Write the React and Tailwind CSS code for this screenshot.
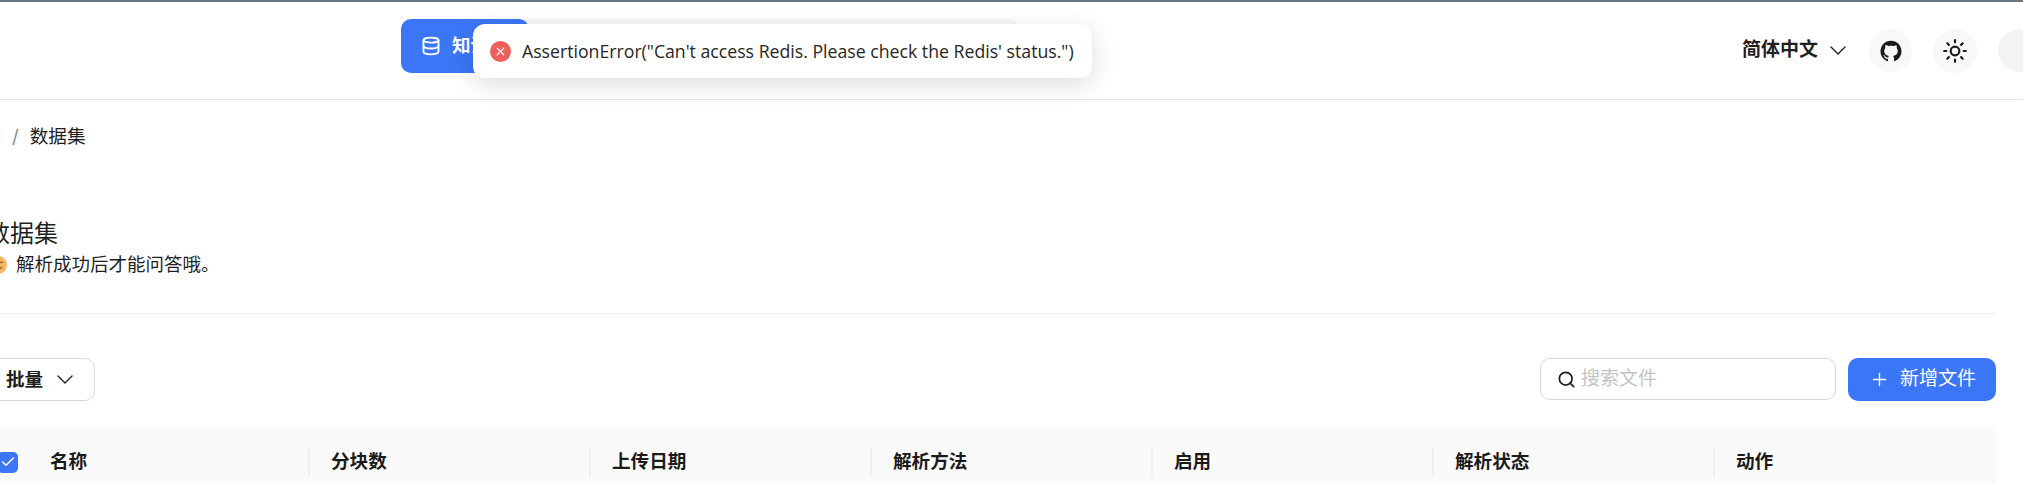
import React from 'react';
import { Database, Plus, Search, Sun, Check, X } from 'lucide-react';
import { AiOutlineGithub } from 'react-icons/ai';

function Chevron({ className }) {
  return (
    <svg width="16" height="9" viewBox="0 0 16 9" fill="none" className={className}>
      <path d="M1 1l7 7 7-7" stroke="#1f1f1f" strokeWidth="1.4" strokeLinecap="round" strokeLinejoin="round" />
    </svg>
  );
}

function Smile() {
  return (
    <svg width="18" height="18" viewBox="0 0 18 18" className="ml-[3px] shrink-0">
      <circle cx="9" cy="9" r="9" fill="#f6b65f" />
      <path d="M4 7q1.5-2 3 0M11 7q1.5-2 3 0" stroke="#8a5a1e" strokeWidth="1.2" fill="none" />
      <path d="M5 11q4 4 8 0" stroke="#8a5a1e" strokeWidth="1.2" fill="none" />
    </svg>
  );
}

function Col({ label }) {
  return (
    <div className="flex h-[30px] w-[281px] shrink-0 items-center border-l-2 border-[#f0f0f0] pl-[21px] text-[18.6px] font-bold text-[#1a1a1a]">
      {label}
    </div>
  );
}

export default function App() {
  return (
    <div className="h-[484px] w-[2023px] overflow-hidden bg-white font-['Inter','Noto_Sans_CJK_SC',sans-serif] text-[#1f1f1f]">
      <div className="h-[2px] bg-[#6b7780]" />
      <header className="relative flex h-[98px] items-center border-b border-[#e5e5e5] pl-[401px]">
        <div className="mb-[9px] flex h-[54px] w-[618px] items-center rounded-[10px] bg-[#f7f7f8]">
          <div className="flex h-[54px] w-[128px] items-center gap-[11px] rounded-[10px] bg-[#3b76f6] pl-[20px] text-[18.6px] font-bold text-white">
            <Database size={20} strokeWidth={2.2} />
            <span>知识库</span>
          </div>
        </div>
        <div className="ml-auto flex items-center">
          <span className="text-[19px] font-bold">简体中文</span>
          <Chevron className="ml-[12px]" />
          <div className="ml-[23px] flex size-[43px] items-center justify-center rounded-full bg-[#f8f8f8]">
            <AiOutlineGithub size={24} className="text-[#1a1a1a]" />
          </div>
          <div className="ml-[21px] flex size-[44px] items-center justify-center rounded-full bg-[#f8f8f8]">
            <Sun size={26} strokeWidth={2} className="text-[#1a1a1a]" />
          </div>
          <div className="ml-[21px] -mr-[18px] size-[43px] shrink-0 rounded-full bg-[#f2f3f5]" />
        </div>
        <div className="absolute left-[473px] top-[22px] flex h-[54px] w-[619px] items-center rounded-[12px] bg-white pl-[17px] shadow-[0_6px_24px_rgba(0,0,0,0.14)]">
          <div className="flex size-[21px] items-center justify-center rounded-full bg-[#ee5f5b]">
            <X size={13} strokeWidth={2.2} className="text-white" />
          </div>
          <span className="ml-[11px] whitespace-nowrap font-['Open_Sans','Noto_Sans_CJK_SC',sans-serif] text-[17.7px] text-[#262626]">
            AssertionError("Can't access Redis. Please check the Redis' status.")
          </span>
        </div>
      </header>

      <main className="-ml-[14px] pr-[27px]">
        <div className="-ml-[41px] flex h-[74px] items-center text-[18.67px]">
          <span className="text-[#8c8c8c]">知识库</span>
          <span className="mx-[11px] text-[#8c8c8c]">/</span>
          <span>数据集</span>
        </div>
        <h1 className="mt-[44px] text-[24px] leading-[32px]">数据集</h1>
        <div className="mt-[2px] flex h-[26px] items-center gap-[9px] text-[18.5px]">
          <Smile />
          <span>解析成功后才能问答哦。</span>
        </div>
        <div className="mt-[35px] h-px bg-[#eeeeee]" />

        <div className="mt-[44px] flex items-start">
          <button className="flex h-[43px] w-[109px] items-center rounded-[10px] border border-[#d9d9d9] pl-[19px] text-[18.6px] font-bold">
            <span>批量</span>
            <Chevron className="ml-[14px]" />
          </button>
          <div className="ml-auto flex h-[42px] w-[296px] items-center rounded-[10px] border border-[#d9d9d9] pl-[16px] text-[19px] text-[#c4c4c4]">
            <Search size={19} strokeWidth={2.2} className="text-[#1f1f1f]" />
            <span className="ml-[5px]">搜索文件</span>
          </div>
          <button className="ml-[12px] flex h-[43px] w-[148px] items-center rounded-[10px] bg-[#3b76f6] pl-[21px] text-[19px] text-white">
            <Plus size={21} strokeWidth={1.5} />
            <span className="ml-[10px]">新增文件</span>
          </button>
        </div>

        <div className="mt-[24px] flex h-[72px] items-start rounded-t-[10px] bg-[#fafafa] pt-[22px]">
          <div className="flex h-[30px] w-[322px] shrink-0 items-center pl-[11px]">
            <div className="flex size-[21px] items-center justify-center rounded-[5px] bg-[#3b76f6]">
              <Check size={16} strokeWidth={2.2} className="text-white" />
            </div>
            <span className="ml-[32px] text-[18.6px] font-bold text-[#1a1a1a]">名称</span>
          </div>
          <Col label="分块数" />
          <Col label="上传日期" />
          <Col label="解析方法" />
          <Col label="启用" />
          <Col label="解析状态" />
          <Col label="动作" />
        </div>
      </main>
    </div>
  );
}
